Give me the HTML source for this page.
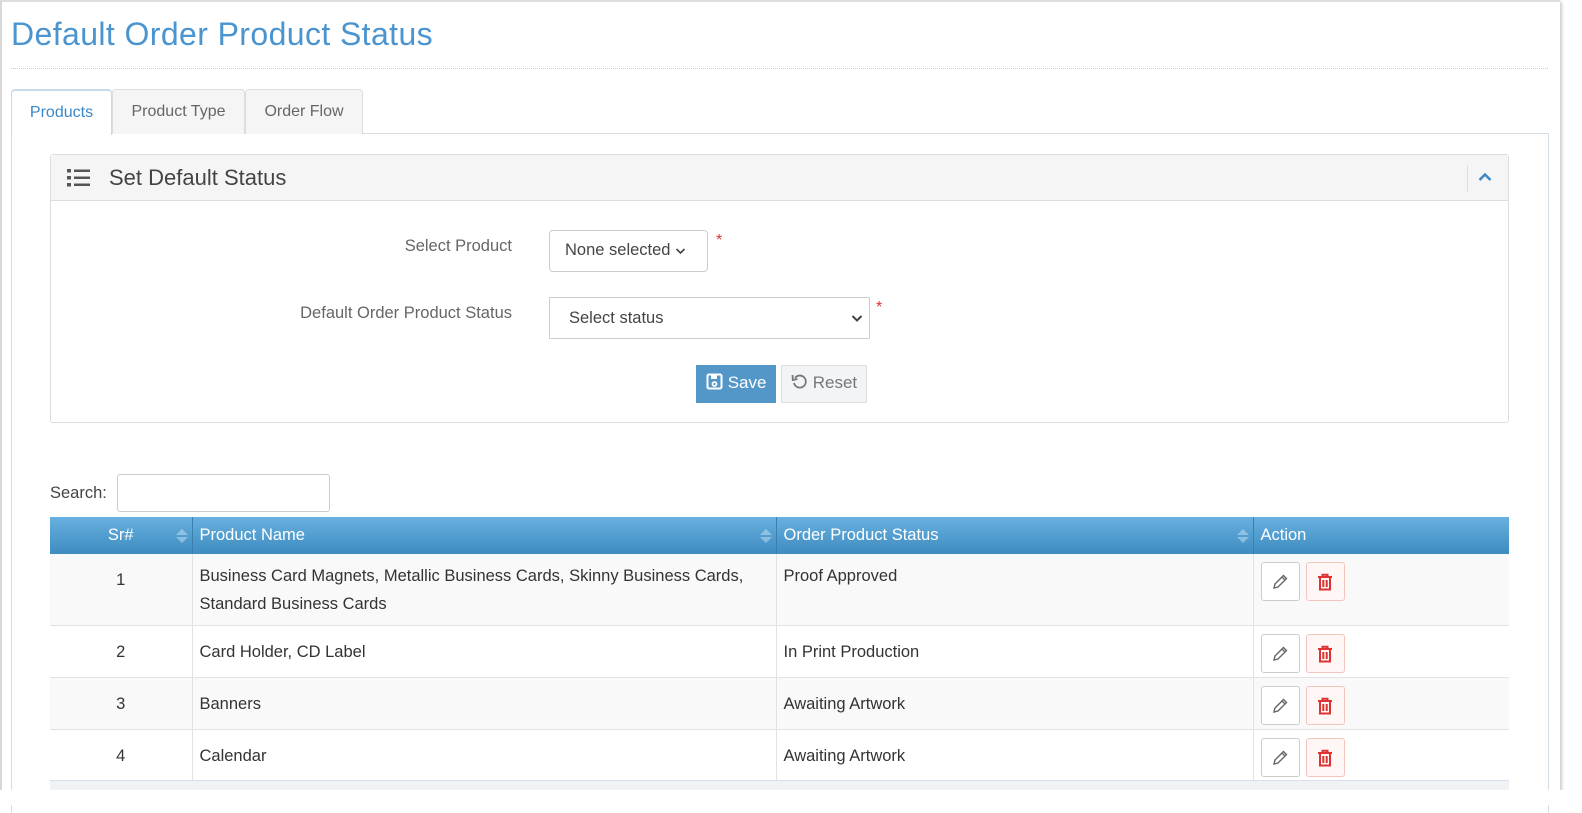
<!DOCTYPE html>
<html><head><meta charset="utf-8"><style>
*{box-sizing:border-box;margin:0;padding:0}
body{width:1582px;height:805px;background:#fff;font-family:"Liberation Sans",sans-serif;color:#333;position:relative;overflow:hidden}
.frame{position:absolute;left:0;top:0;width:1560px;height:790px;border-top:2px solid #ddd;border-left:2px solid #d8d8d8;box-shadow:2px 2px 3px rgba(0,0,0,.2);background:#fff}
.a{position:absolute}
h1{position:absolute;left:11px;top:16px;font-weight:normal;font-size:32px;color:#4a94d0;letter-spacing:.4px}
.dots{left:11px;top:68px;width:1537px;border-top:1px dotted #ccc}
.tab{top:89px;height:45px;border:1px solid #ddd;border-bottom:none;background:#f5f5f5;border-radius:4px 4px 0 0;font-size:16px;color:#666;text-align:center;line-height:44px}
.tab.act{background:#fff;color:#3a88c8;border-top:2px solid #7aacd8;border-color:#c9d9ea;height:46px;z-index:2}
.content{left:11px;top:133px;width:1538px;height:680px;border:1px solid #d5dde5;border-bottom:none}
.panel{left:50px;top:154px;width:1459px;height:269px;border:1px solid #ddd;border-radius:3px}
.ph{left:0;top:0;width:100%;height:46px;background:#f5f5f5;border-bottom:1px solid #ddd}
.lbl{font-size:16.5px;color:#666;text-align:right;width:300px}
.sel{border:1px solid #ccc;border-radius:4px;background:#fff;font-size:16.5px;color:#444}
.star{color:#d33;font-size:16px}
table{position:absolute;left:50px;top:517px;width:1459px;border-collapse:collapse;font-size:16.5px}
th{height:37px;background:linear-gradient(#68b0e0,#3e8cc0);color:#fff;font-weight:normal;text-align:left;padding-left:7px;border-right:1px solid #3a7fb0;position:relative}
td{vertical-align:top;padding:12px 7px 0;border-right:1px solid #e2e2e2;border-bottom:1px solid #e2e2e2;line-height:28px;color:#333}
td:first-child{text-align:center}
tr.o td{background:#f9f9f9}
.srt{position:absolute;right:10px;top:12px;width:0;height:0}
.srt:before{content:"";position:absolute;left:-6px;top:0;border:6px solid transparent;border-top:none;border-bottom:6px solid rgba(255,255,255,.35)}
.srt:after{content:"";position:absolute;left:-6px;top:8px;border:6px solid transparent;border-bottom:none;border-top:6px solid rgba(255,255,255,.35)}
.btn{display:inline-block;width:39px;height:39px;border:1px solid #ccc;border-radius:3px;vertical-align:top;margin-top:-4px;background:#fff;text-align:center;padding-top:9px}
.btn.d{border-color:#f3c5bd;background:#fff7f6;margin-left:6px}
</style></head><body>
<div class="frame"></div>
<h1>Default Order Product Status</h1>
<div class="a dots"></div>
<div class="a content"></div>
<div class="a tab act" style="left:11px;width:101px">Products</div>
<div class="a tab" style="left:112px;width:133px">Product Type</div>
<div class="a tab" style="left:245px;width:118px">Order Flow</div>
<div class="a panel">
 <div class="a ph">
  <svg class="a" style="left:16px;top:13px" width="24" height="20" viewBox="0 0 24 20"><g fill="#555"><rect x="0" y="1" width="4" height="3.5"/><rect x="0" y="8" width="4" height="3.5"/><rect x="0" y="15" width="4" height="3.5"/><rect x="7" y="1.5" width="16" height="2.5"/><rect x="7" y="8.5" width="16" height="2.5"/><rect x="7" y="15.5" width="16" height="2.5"/></g></svg>
  <div class="a" style="left:58px;top:10px;font-size:22px;color:#444">Set Default Status</div>
  <div class="a" style="left:1416px;top:10px;height:27px;border-left:1px solid #ddd"></div>
  <svg class="a" style="left:1427px;top:17px" width="14" height="10" viewBox="0 0 14 10"><path d="M1.5 8 L7 2.5 L12.5 8" fill="none" stroke="#3a88c8" stroke-width="2.5"/></svg>
 </div>
</div>
<div class="a lbl" style="left:212px;top:237px">Select Product</div>
<div class="a sel" style="left:549px;top:230px;width:159px;height:42px;padding:10px 0 0 15px">None selected <svg width="11" height="8" viewBox="0 0 11 8"><path d="M1.5 2 L5.5 6 L9.5 2" fill="none" stroke="#444" stroke-width="1.6"/></svg></div>
<div class="a star" style="left:716px;top:232px">*</div>
<div class="a lbl" style="left:212px;top:304px">Default Order Product Status</div>
<div class="a sel" style="left:549px;top:297px;width:321px;height:42px;padding:11px 0 0 19px;border-radius:1px">Select status</div>
<svg class="a" style="left:851px;top:314px" width="12" height="9" viewBox="0 0 12 9"><path d="M1.5 2 L6 6.5 L10.5 2" fill="none" stroke="#444" stroke-width="2"/></svg>
<div class="a star" style="left:876px;top:299px">*</div>
<div class="a" style="left:696px;top:365px;width:80px;height:38px;background:#5397c9;color:#fff;font-size:17px;padding:8px 0 0 10px">
 <svg width="17" height="17" viewBox="0 0 17 17" style="vertical-align:-2px"><rect x="1.5" y="1.5" width="14" height="14" rx="1.5" fill="none" stroke="#fff" stroke-width="2"/><rect x="5" y="2" width="6" height="4" fill="#fff"/><circle cx="8.5" cy="11" r="2" fill="none" stroke="#fff" stroke-width="1.8"/></svg> Save</div>
<div class="a" style="left:781px;top:365px;width:86px;height:38px;background:#f3f4f6;border:1px solid #ddd;color:#777;font-size:17px;padding:7px 0 0 9px">
 <svg width="17" height="17" viewBox="0 0 17 17" style="vertical-align:-2px"><path d="M4 5 A6 6 0 1 1 3 10" fill="none" stroke="#777" stroke-width="1.8"/><path d="M1.5 2 L1.8 7 L6.5 6" fill="none" stroke="#777" stroke-width="1.8"/></svg> Reset</div>
<div class="a" style="left:50px;top:484px;font-size:16.5px;color:#444">Search:</div>
<div class="a" style="left:117px;top:474px;width:213px;height:38px;border:1px solid #ccc;border-radius:3px"></div>
<table>
<tr><th style="width:142px;text-align:center;padding-left:0">Sr#<span class="srt"></span></th><th style="width:584px">Product Name<span class="srt"></span></th><th style="width:477px">Order Product Status<span class="srt"></span></th><th style="border-right:none">Action</th></tr>
<tr class="o" style="height:71px"><td>1</td><td style="padding-top:8px">Business Card Magnets, Metallic Business Cards, Skinny Business Cards, Standard Business Cards</td><td style="padding-top:8px">Proof Approved</td><td style="border-right:none"><span class="btn"><svg width="18" height="18" viewBox="0 0 18 18"><path d="M3 15 L4 11 L12.5 2.5 L15.5 5.5 L7 14 Z M11 4 L14 7" fill="none" stroke="#666" stroke-width="1.4"/></svg></span><span class="btn d"><svg width="16" height="18" viewBox="0 0 16 18"><path d="M1 4 H15 M5.5 4 V1.8 H10.5 V4 M3 4 V16.5 H13 V4 M6.3 7 V14 M9.7 7 V14" fill="none" stroke="#d33" stroke-width="2"/></svg></span></td></tr>
<tr style="height:52px"><td>2</td><td>Card Holder, CD Label</td><td>In Print Production</td><td style="border-right:none"><span class="btn"><svg width="18" height="18" viewBox="0 0 18 18"><path d="M3 15 L4 11 L12.5 2.5 L15.5 5.5 L7 14 Z M11 4 L14 7" fill="none" stroke="#666" stroke-width="1.4"/></svg></span><span class="btn d"><svg width="16" height="18" viewBox="0 0 16 18"><path d="M1 4 H15 M5.5 4 V1.8 H10.5 V4 M3 4 V16.5 H13 V4 M6.3 7 V14 M9.7 7 V14" fill="none" stroke="#d33" stroke-width="2"/></svg></span></td></tr>
<tr class="o" style="height:52px"><td>3</td><td>Banners</td><td>Awaiting Artwork</td><td style="border-right:none"><span class="btn"><svg width="18" height="18" viewBox="0 0 18 18"><path d="M3 15 L4 11 L12.5 2.5 L15.5 5.5 L7 14 Z M11 4 L14 7" fill="none" stroke="#666" stroke-width="1.4"/></svg></span><span class="btn d"><svg width="16" height="18" viewBox="0 0 16 18"><path d="M1 4 H15 M5.5 4 V1.8 H10.5 V4 M3 4 V16.5 H13 V4 M6.3 7 V14 M9.7 7 V14" fill="none" stroke="#d33" stroke-width="2"/></svg></span></td></tr>
<tr style="height:52px"><td>4</td><td>Calendar</td><td>Awaiting Artwork</td><td style="border-right:none"><span class="btn"><svg width="18" height="18" viewBox="0 0 18 18"><path d="M3 15 L4 11 L12.5 2.5 L15.5 5.5 L7 14 Z M11 4 L14 7" fill="none" stroke="#666" stroke-width="1.4"/></svg></span><span class="btn d"><svg width="16" height="18" viewBox="0 0 16 18"><path d="M1 4 H15 M5.5 4 V1.8 H10.5 V4 M3 4 V16.5 H13 V4 M6.3 7 V14 M9.7 7 V14" fill="none" stroke="#d33" stroke-width="2"/></svg></span></td></tr>
</table>
<div class="a" style="left:50px;top:780px;width:1459px;height:10px;background:#f0f3f6;border-top:1px solid #dde"></div>
<div class="a" style="left:0;top:790px;width:1582px;height:15px;background:#fff"></div>
</body></html>
